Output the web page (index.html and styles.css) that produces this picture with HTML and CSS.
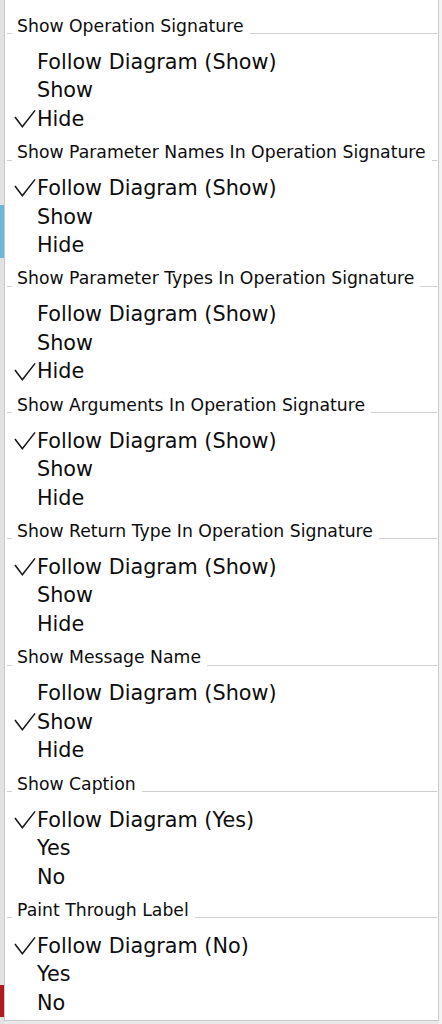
FILE: index.html
```html
<!DOCTYPE html>
<html>
<head>
<meta charset="utf-8">
<link rel="stylesheet" href="styles.css">
</head>
<body>
<div class="screen">
  <div class="edge-left">
    <div class="el-blue"></div>
    <div class="el-red"></div>
  </div>
  <div class="menu">
    <div class="section">
      <div class="hd"><span class="stub"></span><span class="ht">Show Operation Signature</span><span class="ln"></span></div>
      <div class="it"><span class="ck"></span><span>Follow Diagram (Show)</span></div>
      <div class="it"><span class="ck"></span><span>Show</span></div>
      <div class="it"><span class="ck"><svg viewBox="0 0 24 22" width="24" height="22"><polyline points="1,9 8.7,19 22,2"/></svg></span><span>Hide</span></div>
    </div>
    <div class="section">
      <div class="hd"><span class="stub"></span><span class="ht">Show Parameter Names In Operation Signature</span><span class="ln"></span></div>
      <div class="it"><span class="ck"><svg viewBox="0 0 24 22" width="24" height="22"><polyline points="1,9 8.7,19 22,2"/></svg></span><span>Follow Diagram (Show)</span></div>
      <div class="it"><span class="ck"></span><span>Show</span></div>
      <div class="it"><span class="ck"></span><span>Hide</span></div>
    </div>
    <div class="section">
      <div class="hd"><span class="stub"></span><span class="ht">Show Parameter Types In Operation Signature</span><span class="ln"></span></div>
      <div class="it"><span class="ck"></span><span>Follow Diagram (Show)</span></div>
      <div class="it"><span class="ck"></span><span>Show</span></div>
      <div class="it"><span class="ck"><svg viewBox="0 0 24 22" width="24" height="22"><polyline points="1,9 8.7,19 22,2"/></svg></span><span>Hide</span></div>
    </div>
    <div class="section">
      <div class="hd"><span class="stub"></span><span class="ht">Show Arguments In Operation Signature</span><span class="ln"></span></div>
      <div class="it"><span class="ck"><svg viewBox="0 0 24 22" width="24" height="22"><polyline points="1,9 8.7,19 22,2"/></svg></span><span>Follow Diagram (Show)</span></div>
      <div class="it"><span class="ck"></span><span>Show</span></div>
      <div class="it"><span class="ck"></span><span>Hide</span></div>
    </div>
    <div class="section">
      <div class="hd"><span class="stub"></span><span class="ht">Show Return Type In Operation Signature</span><span class="ln"></span></div>
      <div class="it"><span class="ck"><svg viewBox="0 0 24 22" width="24" height="22"><polyline points="1,9 8.7,19 22,2"/></svg></span><span>Follow Diagram (Show)</span></div>
      <div class="it"><span class="ck"></span><span>Show</span></div>
      <div class="it"><span class="ck"></span><span>Hide</span></div>
    </div>
    <div class="section">
      <div class="hd"><span class="stub"></span><span class="ht">Show Message Name</span><span class="ln"></span></div>
      <div class="it"><span class="ck"></span><span>Follow Diagram (Show)</span></div>
      <div class="it"><span class="ck"><svg viewBox="0 0 24 22" width="24" height="22"><polyline points="1,9 8.7,19 22,2"/></svg></span><span>Show</span></div>
      <div class="it"><span class="ck"></span><span>Hide</span></div>
    </div>
    <div class="section">
      <div class="hd"><span class="stub"></span><span class="ht">Show Caption</span><span class="ln"></span></div>
      <div class="it"><span class="ck"><svg viewBox="0 0 24 22" width="24" height="22"><polyline points="1,9 8.7,19 22,2"/></svg></span><span>Follow Diagram (Yes)</span></div>
      <div class="it"><span class="ck"></span><span>Yes</span></div>
      <div class="it"><span class="ck"></span><span>No</span></div>
    </div>
    <div class="section">
      <div class="hd"><span class="stub"></span><span class="ht">Paint Through Label</span><span class="ln"></span></div>
      <div class="it"><span class="ck"><svg viewBox="0 0 24 22" width="24" height="22"><polyline points="1,9 8.7,19 22,2"/></svg></span><span>Follow Diagram (No)</span></div>
      <div class="it"><span class="ck"></span><span>Yes</span></div>
      <div class="it"><span class="ck"></span><span>No</span></div>
    </div>
  </div>
  <div class="edge-right"></div>
</div>
</body>
</html>
```

FILE: styles.css
```css
html, body {
  margin: 0;
  padding: 0;
}
body {
  width: 442px;
  height: 1024px;
  overflow: hidden;
  background: #e9e9e9;
  font-family: "DejaVu Sans", "Noto Sans", sans-serif;
  color: #0d0d0d;
}
.screen {
  display: flex;
  align-items: flex-start;
  height: 1024px;
}
.edge-left {
  width: 4px;
  height: 1024px;
  background: #e2e2e2;
  display: flex;
  flex-direction: column;
  padding-top: 205px;
  box-sizing: border-box;
}
.el-blue {
  height: 53px;
  background: #6cb6dc;
}
.el-red {
  height: 32px;
  margin-top: 727px;
  background: #b0191e;
}
.edge-right {
  width: 3px;
  height: 1024px;
  background: #f4f4f4;
}
.menu {
  width: 435px;
  box-sizing: border-box;
  height: 1021px;
  background: #ffffff;
  border-left: 1px solid #c9c9c9;
  border-right: 1px solid #c9c9c9;
  border-bottom: 1px solid #c9c9c9;
  padding-top: 7px;
}
.section {
  display: flex;
  flex-direction: column;
}
.hd {
  display: flex;
  align-items: center;
  height: 20px;
  padding: 8.75px 0 12.05px;
  font-size: 17.25px;
  line-height: 20px;
  white-space: nowrap;
}
.stub {
  width: 5px;
  height: 1px;
  margin-left: 2px;
  margin-top: 16px;
  background: #cfcfcf;
}
.ht {
  padding: 0 6px 0 5px;
}
.ln {
  flex: 1;
  height: 1px;
  margin-top: 16px;
  margin-right: 1px;
  background: #cfcfcf;
}
.it {
  display: flex;
  align-items: center;
  height: 28.5px;
  font-size: 20.75px;
  line-height: 28.5px;
  white-space: nowrap;
}
.ck {
  width: 32px;
  height: 22px;
  display: flex;
  align-items: center;
}
.ck svg {
  margin-left: 9px;
  fill: none;
  stroke: #151515;
  stroke-width: 1.6;
  stroke-linejoin: miter;
}
```
